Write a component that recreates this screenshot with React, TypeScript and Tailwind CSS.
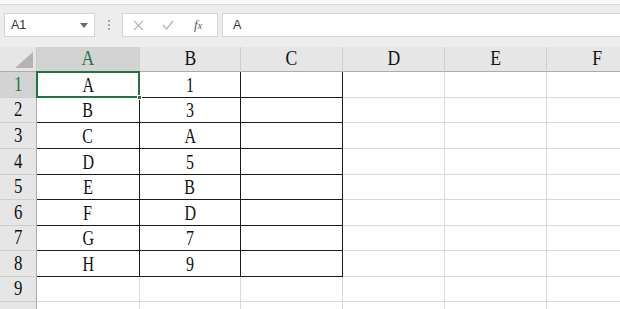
import React from "react";

const cols = ["A", "B", "C", "D", "E", "F"];
const colWidths = [103, 101, 102, 102, 102, 102];
const rowHeights = [26, 25, 26, 26, 25, 26, 25, 26, 25, 25];

const data: Record<number, [string, string]> = {
  1: ["A", "1"],
  2: ["B", "3"],
  3: ["C", "A"],
  4: ["D", "5"],
  5: ["E", "B"],
  6: ["F", "D"],
  7: ["G", "7"],
  8: ["H", "9"],
};

const serif = "font-['Liberation_Serif','DejaVu_Serif',serif]";

function Glyph({ children, size }: { children: React.ReactNode; size: string }) {
  return <span className={`inline-block scale-x-[0.8] leading-none ${size}`}>{children}</span>;
}

function FormulaBar() {
  return (
    <div className="bg-[#ededed]">
      <div className="h-[5px] border-b border-[#d8d8d8] bg-[#f8f8f8]" />
      <div className="flex h-[42px] items-start pt-[8px] font-['Liberation_Sans','Noto_Sans',sans-serif] text-[12.5px] text-[#333]">
        <div className="ml-[4px] flex h-[24px] w-[91px] items-center justify-between border border-[#d6d6d6] bg-white pl-[6px] pr-[6px]">
          <span>A1</span>
          <svg width="8" height="5" viewBox="0 0 8 5">
            <path d="M0 0 L8 0 L4 5 Z" fill="#6b6b6b" />
          </svg>
        </div>
        <div className="flex h-[24px] w-[27px] flex-col items-center justify-center gap-[2px]">
          <span className="h-[2px] w-[2px] bg-[#a8a8a8]" />
          <span className="h-[2px] w-[2px] bg-[#a8a8a8]" />
          <span className="h-[2px] w-[2px] bg-[#a8a8a8]" />
        </div>
        <div className="flex h-[24px] w-[96px] items-center border border-[#d6d6d6] bg-white">
          <svg className="ml-[10px]" width="11" height="11" viewBox="0 0 11 11">
            <path d="M1 1 L10 10 M10 1 L1 10" stroke="#b8b8b8" strokeWidth="1.2" fill="none" />
          </svg>
          <svg className="ml-[18px]" width="12" height="10" viewBox="0 0 12 10">
            <path d="M1 5 L4.5 9 L11 1" stroke="#b8b8b8" strokeWidth="1.4" fill="none" />
          </svg>
          <span className="ml-[20px] font-['Liberation_Serif',serif] text-[13px] italic text-[#555]">
            f<span className="text-[10px]">x</span>
          </span>
        </div>
        <div className="ml-[4px] flex h-[24px] flex-1 items-center border border-r-0 border-[#d6d6d6] bg-white pl-[10px]">
          <span>A</span>
        </div>
      </div>
    </div>
  );
}

function cellBorders(row: number, col: number) {
  const inTable = row >= 1 && row <= 8 && col <= 2;
  const right = inTable ? "border-r-[#1a1a1a]" : "border-r-[#d9d9d9]";
  const bottom = inTable ? "border-b-[#1a1a1a]" : "border-b-[#d9d9d9]";
  return `${right} ${bottom}`;
}

export default function App() {
  return (
    <div className={`relative h-[309px] w-[620px] overflow-hidden bg-white ${serif}`}>
      <FormulaBar />
      <div className="relative">
        {/* header row */}
        <div className="flex h-[25px]">
          <div className="relative h-full w-[37px] shrink-0 border-b border-r border-b-[#ababab] border-r-[#c9c9c9] bg-[#e6e6e6]">
            <svg className="absolute bottom-[3px] right-[3px]" width="18" height="16" viewBox="0 0 18 16">
              <path d="M18 0 L18 16 L0 16 Z" fill="#b4b4b4" />
            </svg>
          </div>
          {cols.map((c, i) => (
            <div
              key={c}
              style={{ width: colWidths[i] }}
              className={`flex h-full shrink-0 items-end justify-center border-b border-r border-b-[#ababab] border-r-[#cfcfcf] pb-[2px] ${
                i === 0 ? "bg-[#d3d3d3] text-[#217346]" : "bg-[#e6e6e6] text-[#111]"
              }`}
            >
              <Glyph size="text-[22px]">{c}</Glyph>
            </div>
          ))}
        </div>
        {/* rows */}
        {rowHeights.map((h, r) => {
          const row = r + 1;
          return (
            <div key={row} className="flex" style={{ height: h }}>
              <div
                className={`flex h-full w-[37px] shrink-0 items-end justify-center border-b border-r border-b-[#cfcfcf] border-r-[#ababab] pb-[2px] ${
                  row === 1 ? "bg-[#d3d3d3] text-[#217346]" : "bg-[#e6e6e6] text-[#111]"
                }`}
              >
                {row < 10 ? <Glyph size="text-[21px]">{row}</Glyph> : null}
              </div>
              {cols.map((c, i) => (
                <div
                  key={c}
                  style={{ width: colWidths[i] }}
                  className={`flex h-full shrink-0 items-end justify-center border-b border-r pb-[2px] text-[#111] ${cellBorders(row, i)}`}
                >
                  {data[row] && i < 2 ? <Glyph size="text-[20px]">{data[row][i]}</Glyph> : null}
                </div>
              ))}
            </div>
          );
        })}
        {/* selection of A1 */}
        <div className="pointer-events-none absolute left-[36px] top-[24px] h-[27px] w-[104px] border-2 border-[#217346]" />
        <div className="pointer-events-none absolute left-[137px] top-[48px] h-[5px] w-[5px] border border-white bg-[#217346]" />
      </div>
    </div>
  );
}
